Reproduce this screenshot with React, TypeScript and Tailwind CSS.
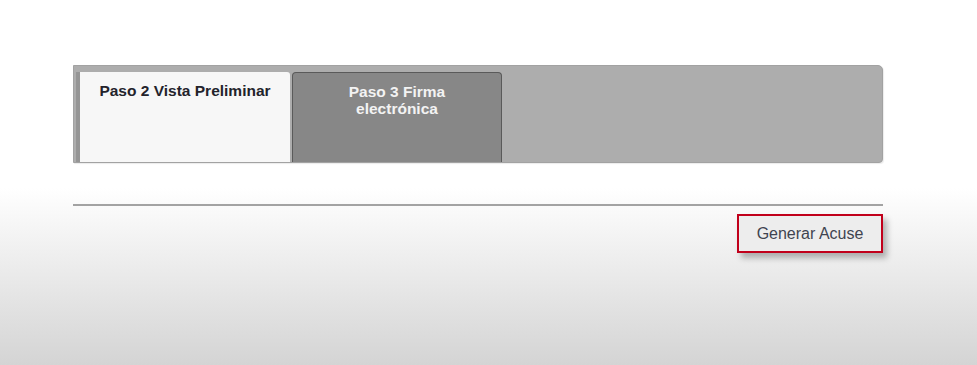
import React from 'react';

const font = { fontFamily: '"Liberation Sans", Arial, sans-serif' };

const App: React.FC = () => {
    return (
        <div
            className="w-full h-[365px] bg-[linear-gradient(to_bottom,#ffffff_0px,#ffffff_188px,#d4d4d4_365px)] overflow-hidden"
            style={font}
        >
            <div className="ml-[73px] w-[810px] pt-[65px]">
                {/* tab strip */}
                <div className="h-[98px] bg-[#adadad] border border-[#a2a2a2] rounded-tr-[5px] rounded-br-[4px] flex items-end pl-[2px] gap-[2px] shadow-[1px_1px_1px_rgba(0,0,0,0.08)]">
                    <div className="w-[214px] h-[90px] bg-[#f7f7f7] border-l-[4px] border-[#959595] rounded-tr-[3px] flex justify-center pt-[10px]">
                        <span className="text-[15.5px] leading-[17px] font-bold text-[#23232b]">Paso 2 Vista Preliminar</span>
                    </div>
                    <div className="w-[210px] h-[90px] bg-[#878787] border border-b-0 border-[#5a5a5a] rounded-t-[4px] flex justify-center pt-[10px] text-center">
                        <span className="text-[15.5px] leading-[17px] font-bold text-[#f3f3f3]">
                            Paso 3 Firma
                            <br />
                            electrónica
                        </span>
                    </div>
                </div>

                {/* separator */}
                <div className="mt-[41px] h-[2px] bg-[#a3a3a3]" />

                {/* actions */}
                <div className="flex justify-end mt-[8px]">
                    <div className="w-[146px] h-[39px] border-2 border-[#c1001b] bg-[#ededed] flex items-center justify-center shadow-[4px_5px_6px_rgba(0,0,0,0.28)]">
                        <button className="text-[16px] text-[#3f4450]">Generar Acuse</button>
                    </div>
                </div>
            </div>
        </div>
    );
};

export default App;
